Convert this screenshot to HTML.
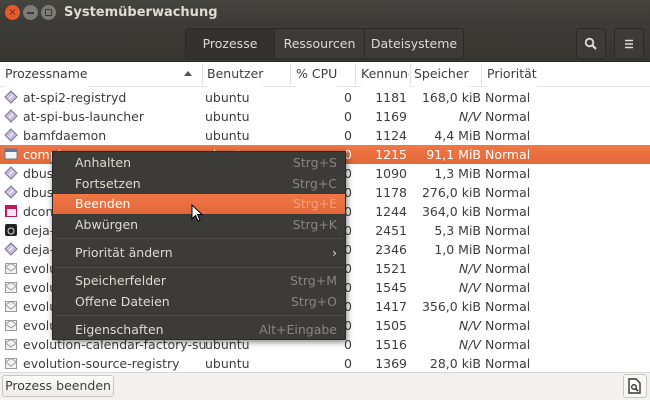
<!DOCTYPE html>
<html><head><meta charset="utf-8"><style>
*{margin:0;padding:0;box-sizing:border-box}
body{width:650px;height:400px;overflow:hidden;font-family:"DejaVu Sans","Liberation Sans",sans-serif;font-size:12px;position:relative;background:#fff;color:#3c3c3c}
.a{position:absolute;white-space:nowrap}
#title{left:0;top:0;width:650px;height:26px;background:linear-gradient(#45443f,#3b3a36)}
#tb{left:0;top:26px;width:650px;height:36px;background:linear-gradient(#3d3c38,#36352f);border-bottom:1px solid #2a2925}
.btn{position:absolute;top:28px;height:31px;border:1px solid #2b2a27;background:#3c3b37;color:#dfdbd2;font-size:12.5px;text-align:center;line-height:29px;border-radius:3px}
.hd{top:62px;height:25px;line-height:24px;background:#fff;border-bottom:1px solid #e4e4e4;color:#3c3c3c;font-size:12.5px}
.cs{position:absolute;top:64px;width:1px;height:21px;background:#e0e0e0}
.row{position:absolute;left:0;width:650px;height:19px;line-height:19px;font-size:12.5px}
.row span{position:absolute;white-space:nowrap}
.menu{left:52px;top:151px;width:294px;height:189px;background:#3c3b37;border:1px solid #2a2925;box-shadow:1px 2px 6px rgba(0,0,0,.5)}
.mi{position:absolute;left:0;width:292px;height:20px;line-height:20px;color:#dfdbd2;font-size:12.5px}
.mi b{font-weight:normal;position:absolute;left:22px}
.mi i{font-style:normal;position:absolute;right:8px;color:#88857e}
.sep{position:absolute;left:2px;width:288px;height:1px;background:#4c4b47}
</style></head><body>
<div class="a" id="title"></div>
<div class="a" style="left:5px;top:5px;width:15px;height:15px;border-radius:50%;background:#e9592e;color:#6a2a10;font-size:10px;line-height:15px;text-align:center">×</div>
<div class="a" style="left:23px;top:5px;width:15px;height:15px;border-radius:50%;background:#7d7b75"><div style="position:absolute;left:4px;top:7px;width:7px;height:1.5px;background:#3c3b37"></div></div>
<div class="a" style="left:41px;top:5px;width:15px;height:15px;border-radius:50%;background:#7d7b75"><div style="position:absolute;left:4px;top:4px;width:7px;height:7px;border:1.5px solid #3c3b37"></div></div>
<div class="a" style="left:64px;top:3px;color:#dfdbd2;font-weight:bold;font-size:13px;line-height:20px">Systemüberwachung</div>
<div class="a" id="tb"></div>
<div class="btn" style="left:185px;width:90px;background:#33322e;border-radius:3px 0 0 3px">Prozesse</div>
<div class="btn" style="left:274px;width:91px;border-radius:0">Ressourcen</div>
<div class="btn" style="left:364px;width:100px;border-radius:0 3px 3px 0">Dateisysteme</div>
<div class="btn" style="left:576px;width:30px"><svg width="14" height="14" viewBox="0 0 14 14" style="margin-top:8px"><circle cx="5.5" cy="5.5" r="3.8" fill="none" stroke="#dfdbd2" stroke-width="1.8"/><path d="M8.3 8.3L12 12" stroke="#dfdbd2" stroke-width="2.2"/></svg></div>
<div class="btn" style="left:614px;width:30px"><svg width="12" height="12" viewBox="0 0 12 12" style="margin-top:9px"><path d="M2 2.5h8M2 6h8M2 9.5h8" stroke="#dfdbd2" stroke-width="1.6"/></svg></div>

<div class="a hd" style="left:0;width:650px"></div>
<div class="a hd" style="left:5px;border:0">Prozessname</div>
<div class="a" style="left:184px;top:71px;width:0;height:0;border-left:4px solid transparent;border-right:4px solid transparent;border-bottom:5px solid #555"></div>
<div class="a hd" style="left:207px;border:0">Benutzer</div>
<div class="a hd" style="left:296px;border:0">% CPU</div>
<div class="a hd" style="left:361px;border:0;width:48px;overflow:hidden">Kennung</div>
<div class="a hd" style="left:414px;border:0">Speicher</div>
<div class="a hd" style="left:487px;border:0">Priorität</div>
<div class="cs" style="left:202px"></div><div class="cs" style="left:290px"></div><div class="cs" style="left:355px"></div><div class="cs" style="left:410px"></div><div class="cs" style="left:481px"></div>

<div id="rows"></div>
<script>
var d=[["at-spi2-registryd","1181","168,0 kiB","p"],["at-spi-bus-launcher","1169","N/V","p"],["bamfdaemon","1124","4,4 MiB","p"],["compiz","1215","91,1 MiB","w"],["dbus-daemon","1090","1,3 MiB","p"],["dbus-daemon","1178","276,0 kiB","p"],["dconf-service","1244","364,0 kiB","d"],["deja-dup-monitor","2451","5,3 MiB","k"],["deja-dup","2346","1,0 MiB","p"],["evolution-addressbook","1521","N/V","e"],["evolution-alarm","1545","N/V","e"],["evolution-calendar","1417","356,0 kiB","e"],["evolution-source","1505","N/V","e"],["evolution-calendar-factory-su","1516","N/V","e"],["evolution-source-registry","1369","28,0 kiB","e"]];
var h="";
d.forEach(function(r,i){var t=88+i*19;var sel=i==3;var c=sel?"#fff":"#3c3c3c";
var ic={p:'<svg width="14" height="14" viewBox="0 0 14 14"><path d="M7 1L13 7L7 13L1 7Z" fill="#c9bfdc" stroke="#7f6e9e"/><path d="M5 9L9 5" stroke="#fff"/></svg>',
w:'<svg width="14" height="14"><rect x="1" y="2" width="12" height="10" fill="#f4f4f4" stroke="#6a7a8a"/><rect x="1" y="2" width="12" height="3" fill="#5a7aa0"/></svg>',
d:'<svg width="14" height="14"><rect x="1" y="1" width="12" height="12" fill="#c2185b"/><rect x="3" y="5" width="9" height="7" fill="#f5e5ee"/></svg>',
k:'<svg width="14" height="14"><rect x="1" y="1" width="12" height="12" rx="2" fill="#222"/><circle cx="7" cy="8" r="3" fill="none" stroke="#ddd"/></svg>',
e:'<svg width="14" height="14"><rect x="1.5" y="2.5" width="11" height="10" fill="#f3f3f3" stroke="#999"/><path d="M1.5 6L7 10L12.5 6M1.5 6L7 2.5L12.5 6" fill="none" stroke="#999"/></svg>'}[r[3]];
var sp=r[2]=="N/V"?'<i>N/V</i>':r[2];
h+='<div class="row" style="top:'+t+'px;color:'+c+';'+(sel?'background:linear-gradient(#f07746,#e4693a)':'')+'"><span style="left:4px;top:2px;line-height:0">'+ic+'</span><span style="left:23px">'+r[0]+'</span><span style="left:205px">ubuntu</span><span style="right:298px">0</span><span style="right:243px">'+r[1]+'</span><span style="right:169px">'+sp+'</span><span style="left:485px">Normal</span></div>';});
document.getElementById("rows").innerHTML=h;
</script>

<div class="a" style="left:0;top:372px;width:650px;height:28px;background:#f2f1f0;border-top:1px solid #d8d8d8"></div>
<div class="a" style="left:2px;top:375px;width:112px;height:22px;border:1px solid #c8c6c2;border-radius:3px;background:linear-gradient(#fbfbfa,#eeedec);font-size:12.5px;line-height:20px;text-align:center;color:#3c3c3c">Prozess beenden</div>
<div class="a" style="left:623px;top:374px;width:24px;height:24px;border:1px solid #c8c6c2;border-radius:3px;background:#f8f8f7"><svg width="14" height="16" viewBox="0 0 14 16" style="margin:3px 0 0 4px"><path d="M1 1h7l4 4v10H1z" fill="#fff" stroke="#333" stroke-width="1.4"/><circle cx="6" cy="9" r="2.3" fill="none" stroke="#333" stroke-width="1.4"/><path d="M7.6 10.6L10 13" stroke="#333" stroke-width="1.6"/></svg></div>

<div class="a menu">
<div class="mi" style="top:1px"><b>Anhalten</b><i>Strg+S</i></div>
<div class="mi" style="top:22px"><b>Fortsetzen</b><i>Strg+C</i></div>
<div class="mi" style="top:42px;background:linear-gradient(#f07746,#e2673a);color:#fff"><b>Beenden</b><i style="color:#f5a07d">Strg+E</i></div>
<div class="mi" style="top:63px"><b>Abwürgen</b><i>Strg+K</i></div>
<div class="sep" style="top:86px"></div>
<div class="mi" style="top:91px"><b>Priorität ändern</b><i style="color:#dfdbd2">›</i></div>
<div class="sep" style="top:115px"></div>
<div class="mi" style="top:119px"><b>Speicherfelder</b><i>Strg+M</i></div>
<div class="mi" style="top:140px"><b>Offene Dateien</b><i>Strg+O</i></div>
<div class="sep" style="top:163px"></div>
<div class="mi" style="top:168px"><b>Eigenschaften</b><i>Alt+Eingabe</i></div>
</div>
<svg class="a" style="left:191px;top:204px" width="12" height="18" viewBox="0 0 12 18"><path d="M1 1V15L4.5 11.5L7 17L9 16L6.5 10.5H11Z" fill="#fff" stroke="#000" stroke-width="1"/></svg>
</body></html>
